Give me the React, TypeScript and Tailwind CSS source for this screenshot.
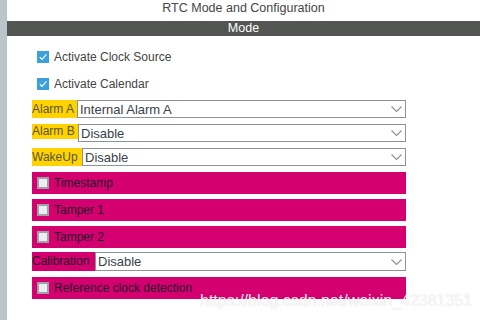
import React from "react";

const font = { fontFamily: '"Liberation Sans", Arial, sans-serif' };

function Chevron() {
  return (
    <svg width="11" height="7" viewBox="0 0 11 7" className="absolute right-[3px] top-1/2 -translate-y-1/2">
      <path d="M0.5 1 L5.5 6 L10.5 1" fill="none" stroke="#8a8f92" strokeWidth="1.1" />
    </svg>
  );
}

function Select({ value }: { value: string }) {
  return (
    <div className="relative flex-1 h-full border border-[#8e9396] bg-white flex items-center pl-[2px] text-[13px] text-[#3a3f4a] leading-none">
      {value}
      <Chevron />
    </div>
  );
}

function CheckedBox() {
  return (
    <div className="w-[12px] h-[12px] bg-[#3ca0dc] flex items-center justify-center">
      <svg width="10" height="10" viewBox="0 0 10 10">
        <path d="M1.8 5.2 L4 7.4 L8.4 2.4" fill="none" stroke="white" strokeWidth="1.2" />
      </svg>
    </div>
  );
}

function EmptyBox() {
  return <div className="w-[12px] h-[12px] bg-[#e9eef0] border-2 border-[#9ca2a6]" />;
}

function PinkRow({ label, mt }: { label: string; mt: string }) {
  return (
    <div className={`ml-[25px] w-[374px] h-[22px] bg-[#d4006f] flex items-center pl-[5px] gap-[5px] ${mt}`}>
      <EmptyBox />
      <span className="text-[12px] text-[#1e1028] leading-none">{label}</span>
    </div>
  );
}

export default function App() {
  return (
    <div className="w-[480px] h-[320px] bg-white flex relative overflow-hidden" style={font}>
      <div className="w-[7px] h-full bg-[#b9c4cb]" />
      <div className="flex-1 flex flex-col">
        <div className="h-[21px] text-center text-[12.5px] leading-[16px] text-[#454545]">RTC Mode and Configuration</div>
        <div className="h-[15px] bg-[#535553] text-white text-[12.5px] leading-[15px] text-center">Mode</div>

        <div className="mt-[8px] h-[26px] flex items-center pl-[30px] gap-[5px]">
          <CheckedBox />
          <span className="text-[12px] text-[#444]">Activate Clock Source</span>
        </div>
        <div className="h-[27px] flex items-center pl-[30px] gap-[5px]">
          <CheckedBox />
          <span className="text-[12px] text-[#444]">Activate Calendar</span>
        </div>

        <div className="mt-[3px] ml-[25px] w-[374px] h-[18px] flex">
          <div className="w-[45px] h-[18px] bg-[#ffd200] text-[12px] leading-[18px] text-[#5a5530]">Alarm A</div>
          <Select value="Internal Alarm A" />
        </div>
        <div className="mt-[6px] ml-[25px] w-[374px] h-[18px] flex">
          <div className="w-[46px] h-[15px] bg-[#ffd200] text-[12px] leading-[15px] text-[#5a5530]">Alarm B</div>
          <Select value="Disable" />
        </div>
        <div className="mt-[6px] ml-[25px] w-[374px] h-[18px] flex">
          <div className="w-[50px] h-[18px] bg-[#ffd200] text-[12px] leading-[18px] text-[#5a5530]">WakeUp</div>
          <Select value="Disable" />
        </div>

        <PinkRow label="Timestamp" mt="mt-[6px]" />
        <PinkRow label="Tamper 1" mt="mt-[5px]" />
        <PinkRow label="Tamper 2" mt="mt-[5px]" />

        <div className="mt-[4px] ml-[25px] w-[374px] h-[19px] flex">
          <div className="w-[63px] h-[19px] bg-[#d4006f] text-[12px] leading-[19px] text-[#1e1028]">Calibration</div>
          <Select value="Disable" />
        </div>

        <PinkRow label="Reference clock detection" mt="mt-[6px]" />
      </div>

      <div
        className="absolute left-[200px] top-[291px] text-[16px] leading-[20px] text-white/90 whitespace-nowrap"
        style={{ textShadow: "0 0 1px rgba(0,0,0,0.22)" }}
      >
        https://blog.csdn.net/weixin_42381351
      </div>
    </div>
  );
}
